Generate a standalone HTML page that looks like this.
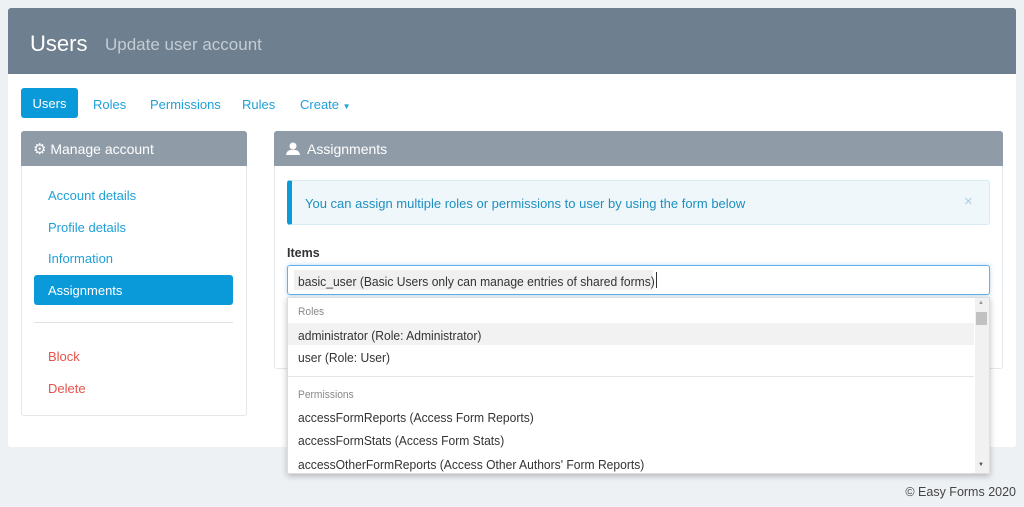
<!DOCTYPE html>
<html><head><meta charset="utf-8"><style>
*{box-sizing:border-box;margin:0;padding:0}
body{width:1024px;height:507px;background:#eef1f4;font-family:"Liberation Sans",sans-serif;position:relative;overflow:hidden;font-size:13px}
.a{position:absolute}
.card{left:8px;top:8px;width:1008px;height:439px;background:#fff;border-radius:3px}
.hd{left:8px;top:8px;width:1008px;height:66px;background:#6e7f8f;border-radius:3px 3px 0 0}
.nav{color:#1fa0d8;font-size:13px;top:97px}
.ph{background:#8f9ca8;color:#fff;font-size:14px;height:35px;line-height:37px;border-radius:3px 3px 0 0;padding-left:12px}
.lnk{color:#1fa0d8;font-size:13px;left:48px}
.red{color:#e8524a;font-size:13px;left:48px}
.dd{font-size:13px;color:#333;left:298px;transform-origin:left;transform:scaleX(0.93);white-space:nowrap}
</style></head><body>
<div class="a card"></div>
<div class="a hd"></div>
<div class="a" style="left:30px;top:31px;color:#fff;font-size:22px">Users</div>
<div class="a" style="left:105px;top:35px;color:#c4ccd4;font-size:17px">Update user account</div>
<div class="a" style="left:21px;top:88px;width:57px;height:30px;background:#0a9ad9;border-radius:3px;color:#fff;text-align:center;line-height:31px">Users</div>
<div class="a nav" style="left:93px">Roles</div>
<div class="a nav" style="left:150px">Permissions</div>
<div class="a nav" style="left:242px">Rules</div>
<div class="a nav" style="left:300px">Create <span style="font-size:8px">▼</span></div>

<div class="a" style="left:21px;top:131px;width:226px;height:285px;border:1px solid #e4e8ec;border-radius:3px;background:#fff"></div>
<div class="a ph" style="left:21px;top:131px;width:226px"><span style="font-size:15px">⚙</span> Manage account</div>
<div class="a lnk" style="top:188px">Account details</div>
<div class="a lnk" style="top:220px">Profile details</div>
<div class="a lnk" style="top:251px">Information</div>
<div class="a" style="left:34px;top:275px;width:199px;height:30px;background:#0a9ad9;border-radius:3px;color:#fff;line-height:31px;padding-left:14px">Assignments</div>
<div class="a" style="left:34px;top:322px;width:199px;height:1px;background:#dde2e6"></div>
<div class="a red" style="top:349px">Block</div>
<div class="a red" style="top:381px">Delete</div>

<div class="a" style="left:274px;top:131px;width:729px;height:238px;border:1px solid #e4e8ec;border-radius:3px;background:#fff"></div>
<div class="a ph" style="left:274px;top:131px;width:729px"><svg width="14" height="13" viewBox="0 0 14 13" style="vertical-align:-1px"><circle cx="7" cy="4" r="3.5" fill="#fff"/><path d="M0 13 Q1 7 7 8 Q13 7 14 13Z" fill="#fff"/></svg>&nbsp; Assignments</div>
<div class="a" style="left:287px;top:180px;width:703px;height:45px;background:#eff7fa;border:1px solid #d8ecf4;border-left:5px solid #0a9ad9;border-radius:3px"></div>
<div class="a" style="left:305px;top:196px;color:#1d8fc0">You can assign multiple roles or permissions to user by using the form below</div>
<div class="a" style="left:964px;top:193px;color:#a9cde0;font-size:15px">×</div>
<div class="a" style="left:287px;top:246px;font-weight:bold;color:#333;font-size:12.5px">Items</div>
<div class="a" style="left:287px;top:265px;width:703px;height:30px;border:1px solid #66afe9;border-radius:3px;box-shadow:0 0 4px rgba(102,175,233,.5)"></div>
<div class="a" style="left:294px;top:270px;width:359px;height:20px;background:#f0f0f0"></div>
<div class="a dd" style="top:274px">basic_user (Basic Users only can manage entries of shared forms)</div>
<div class="a" style="left:656px;top:272px;width:1px;height:16px;background:#333"></div>
<div class="a" style="left:287px;top:297px;width:703px;height:177px;background:#fff;box-shadow:0 2px 6px rgba(0,0,0,.25);border:1px solid #ddd"></div>
<div class="a" style="left:288px;top:323px;width:686px;height:22px;background:#f2f2f2"></div>
<div class="a" style="left:975px;top:298px;width:14px;height:175px;background:#f1f1f1"></div>
<div class="a" style="left:976px;top:312px;width:11px;height:13px;background:#c1c1c1"></div>
<div class="a" style="left:978px;top:300px;font-size:6px;color:#999">▲</div>
<div class="a" style="left:978px;top:462px;font-size:6px;color:#555">▼</div>
<div class="a dd" style="top:306px;font-size:11px;color:#888">Roles</div>
<div class="a dd" style="top:328px">administrator (Role: Administrator)</div>
<div class="a dd" style="top:350px">user (Role: User)</div>
<div class="a" style="left:288px;top:376px;width:686px;height:1px;background:#e5e5e5"></div>
<div class="a dd" style="top:389px;font-size:11px;color:#888">Permissions</div>
<div class="a dd" style="top:410px">accessFormReports (Access Form Reports)</div>
<div class="a dd" style="top:433px">accessFormStats (Access Form Stats)</div>
<div class="a dd" style="top:457px">accessOtherFormReports (Access Other Authors' Form Reports)</div>
<div class="a" style="right:8px;top:485px;color:#444;font-size:12.5px">© Easy Forms 2020</div>
</body></html>
